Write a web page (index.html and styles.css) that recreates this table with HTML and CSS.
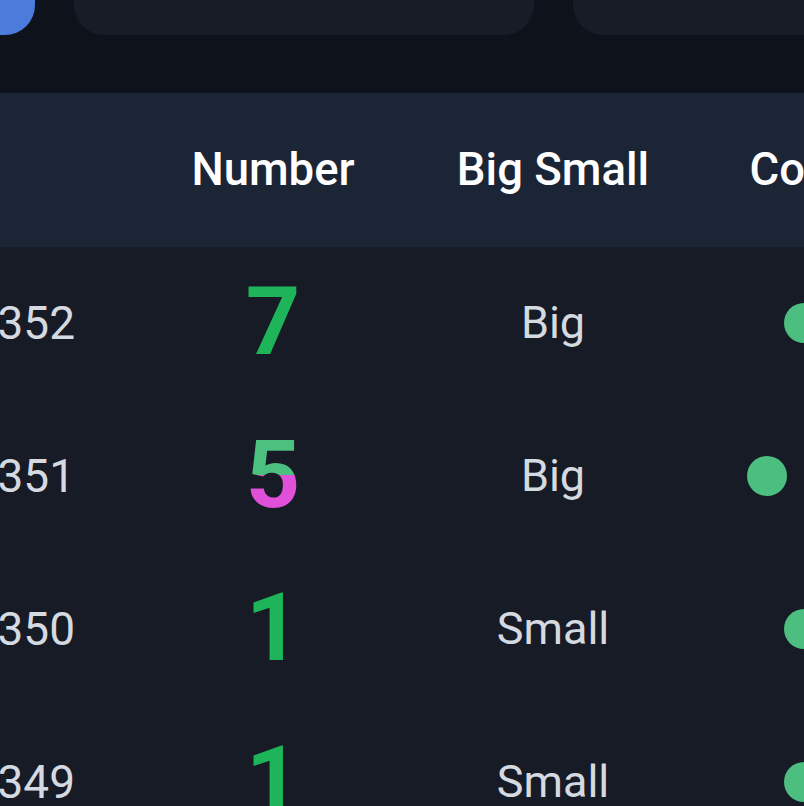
FILE: index.html
```html
<!DOCTYPE html>
<html>
<head>
<meta charset="utf-8">
<link rel="stylesheet" href="styles.css">
</head>
<body>
<div class="tabs">
  <div class="tab tab-active"></div>
  <div class="tab"></div>
  <div class="tab"></div>
</div>
<div class="table">
  <div class="row head">
    <div class="cell period"></div>
    <div class="cell">Number</div>
    <div class="cell">Big Small</div>
    <div class="cell">Color</div>
  </div>
  <div class="row">
    <div class="cell period">20250101010352</div>
    <div class="cell num green">7</div>
    <div class="cell">Big</div>
    <div class="cell dots"><span class="dot dot-green"></span></div>
  </div>
  <div class="row">
    <div class="cell period">20250101010351</div>
    <div class="cell num"><span class="split">5</span></div>
    <div class="cell">Big</div>
    <div class="cell dots"><span class="dot dot-green"></span><span class="dot dot-violet"></span></div>
  </div>
  <div class="row">
    <div class="cell period">20250101010350</div>
    <div class="cell num green">1</div>
    <div class="cell">Small</div>
    <div class="cell dots"><span class="dot dot-green"></span></div>
  </div>
  <div class="row">
    <div class="cell period">20250101010349</div>
    <div class="cell num green">1</div>
    <div class="cell">Small</div>
    <div class="cell dots"><span class="dot dot-green"></span></div>
  </div>
</div>
</body>
</html>
```
FILE: styles.css
```css
html, body {
  margin: 0;
  padding: 0;
}
body {
  width: 804px;
  height: 806px;
  overflow: hidden;
  background: #0e121a;
  font-family: Roboto, "Liberation Sans", sans-serif;
}
.tabs {
  display: flex;
  gap: 39px;
  margin-top: -65px;
  height: 100px;
}
.tab {
  flex: 0 0 460px;
  height: 100px;
  border-radius: 30px;
  background: #181c27;
}
.tab-active {
  flex: 0 0 115px;
  margin-left: -80px;
  background: #4b7cdc;
}
.table {
  margin-top: 58px;
  background: #171b26;
  min-height: 800px;
}
.row {
  display: grid;
  grid-template-columns: 150px 246px 314px 188px;
  height: 153px;
  align-items: center;
  color: #d5d9e0;
  font-size: 45px;
}
.row.head {
  height: 154px;
  background: #1b2536;
  color: #ffffff;
  font-weight: 500;
  font-size: 45.5px;
}
.cell {
  display: flex;
  justify-content: center;
  align-items: center;
  white-space: nowrap;
  padding-bottom: 2px;
}
.cell.period {
  justify-content: flex-end;
  padding-right: 75px;
  font-size: 46px;
}
.num {
  font-size: 95px;
  font-weight: 700;
  padding-bottom: 4px;
}
.green {
  color: #1db45a;
}
.split {
  display: inline-block;
  line-height: 95px;
  background: linear-gradient(to bottom, #4cc07f 0, #4cc07f 51%, #e150d9 51%, #e150d9 100%);
  -webkit-background-clip: text;
  background-clip: text;
  color: transparent;
}
.dots {
  gap: 34px;
}
.dot {
  display: block;
  width: 40px;
  height: 40px;
  border-radius: 50%;
}
.dot-green {
  background: #4cbe7f;
}
.dot-violet {
  background: #c84bd6;
}
```
